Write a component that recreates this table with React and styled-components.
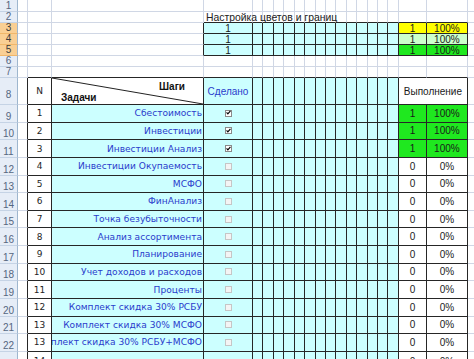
import React from 'react';
import styled, { createGlobalStyle } from 'styled-components';

const GRID = '#d0d7e5';
const DARK = '#262626';
const CYAN = '#ccffff';
const BLUE = '#2a3ccc';

const colWidths = [18, 10, 24, 152, 49, ...Array(14).fill(10.43), 28, 41, 20];
const rowHeights = [12, 11, 11, 11, 11, 11, 11, 27, ...Array(14).fill(17.64), 20];

const tasks = [
  [1, 'Сбестоимость'],
  [2, 'Инвестиции'],
  [3, 'Инвестиции Анализ'],
  [4, 'Инвестиции Окупаемость'],
  [5, 'МСФО'],
  [6, 'ФинАнализ'],
  [7, 'Точка безубыточности'],
  [8, 'Анализ ассортимента'],
  [9, 'Планирование'],
  [10, 'Учет доходов и расходов'],
  [11, 'Проценты'],
  [12, 'Комплект скидка 30% РСБУ'],
  [13, 'Комплект скидка 30% МСФО'],
  [13, 'Комплект скидка 30% РСБУ+МСФО'],
  [14, ''],
];

const setupColors = { 3: '#ffff00', 4: '#ccffcc', 5: '#1fe81f' };

const GlobalStyle = createGlobalStyle`
  html, body { margin: 0; padding: 0; background: #fff; overflow: hidden; }
  body { width: 474px; height: 359px; }
`;

const Sheet = styled.div`
  display: grid;
  grid-template-columns: ${p => p.$cols};
  grid-template-rows: ${p => p.$rows};
  width: 474px;
  height: 359px;
  overflow: hidden;
  font-family: "Liberation Sans", Arial, sans-serif;
`;

const RowHead = styled.div`
  box-sizing: border-box;
  display: flex;
  align-items: flex-end;
  justify-content: center;
  padding-bottom: ${p => (p.$tall ? 4 : 0)}px;
  background: ${p => (p.$active ? '#f9cf94' : '#e6edf7')};
  border-right: 1px solid #9eb6ce;
  border-bottom: 1px solid ${p => (p.$active ? '#f0b76a' : '#c5d3e5')};
  color: ${p => (p.$active ? '#3a3a3a' : '#55667f')};
  font-size: 10px;
  line-height: 10px;
  overflow: hidden;
`;

const Cell = styled.div`
  box-sizing: border-box;
  min-width: 0;
  display: flex;
  align-items: center;
  justify-content: ${p => p.$justify || 'center'};
  padding: 0 ${p => p.$pad || 0}px;
  background: ${p => p.$bg || '#fff'};
  border-right: 1px solid ${p => p.$br};
  border-bottom: 1px solid ${p => p.$bb};
  grid-column: span ${p => p.$span || 1};
  color: ${p => p.$color || '#1a1a1a'};
  font-size: 10px;
  white-space: nowrap;
  overflow: ${p => (p.$spill ? 'visible' : 'hidden')};
  position: relative;
`;

const Caption = styled.span`
  position: relative;
  z-index: 1;
  padding-left: 2px;
  color: #222;
  font-size: 10.4px;
`;

const TaskName = styled.span`
  flex-shrink: 0;
  font-family: "DejaVu Sans", Verdana, sans-serif;
  font-size: 9.1px;
  color: ${BLUE};
`;

const Num = styled.span`
  font-family: "DejaVu Sans", Verdana, sans-serif;
  font-size: 9px;
  color: #1e1e1e;
`;

const Done = styled.span`
  color: ${BLUE};
  font-size: 10px;
`;

const DiagLabels = styled.div`
  position: absolute;
  inset: 0;
  display: flex;
  flex-direction: column;
  justify-content: center;
  padding: 1px 0 0;
  font-weight: bold;
  font-size: 10px;
  line-height: 11px;
  color: #111;
`;

const Steps = styled.span`
  align-self: flex-end;
  padding-right: 18px;
`;

const Tasks = styled.span`
  align-self: flex-start;
  padding-left: 9px;
`;

const DiagLine = styled.svg`
  position: absolute;
  inset: 0;
  width: 100%;
  height: 100%;
`;

const Box = styled.span`
  box-sizing: border-box;
  width: 7px;
  height: 7px;
  display: flex;
  align-items: center;
  justify-content: center;
  background: ${p => (p.$checked ? '#fff' : '#f4f4f4')};
  border: 1px solid ${p => (p.$checked ? '#8a8a8a' : '#c6c6c6')};
`;

function CheckBox({ checked }) {
  return (
    <Box $checked={checked}>
      {checked && (
        <svg width="7" height="7" viewBox="0 0 7 7" style={{ marginTop: -1 }}>
          <polyline points="0.8,3.4 2.6,5.4 6.2,1.2" fill="none" stroke="#000" strokeWidth="1.6" />
        </svg>
      )}
    </Box>
  );
}

const isTable = (r, c) =>
  (r >= 3 && r <= 5 && c >= 4 && c <= 20) || (r >= 8 && c >= 2 && c <= 20);

const borders = (r, c, last = c) => ({
  $br: isTable(r, last) || isTable(r, last + 1) ? DARK : GRID,
  $bb: isTable(r, c) || isTable(r + 1, c) ? DARK : GRID,
});

function cellFor(r, c) {
  const b = borders(r, c);
  const key = `${r}-${c}`;

  if (r === 2 && c === 4) {
    return <Cell key={key} {...b} $justify="flex-start" $spill><Caption>Настройка цветов и границ</Caption></Cell>;
  }

  if (r >= 3 && r <= 5 && c >= 4) {
    if (c === 4) return <Cell key={key} {...b} $bg={CYAN}>1</Cell>;
    if (c === 19) return <Cell key={key} {...b} $bg={setupColors[r]}>1</Cell>;
    if (c === 20) return <Cell key={key} {...b} $bg={setupColors[r]}>100%</Cell>;
    if (c < 19) return <Cell key={key} {...b} $bg={CYAN} />;
  }

  if (r === 8) {
    if (c === 2) return <Cell key={key} {...b}><Num>N</Num></Cell>;
    if (c === 3) {
      return (
        <Cell key={key} {...b}>
          <DiagLine viewBox="0 0 100 100" preserveAspectRatio="none">
            <line x1="0" y1="0" x2="100" y2="100" stroke="#222" strokeWidth="1" vectorEffect="non-scaling-stroke" />
          </DiagLine>
          <DiagLabels>
            <Steps>Шаги</Steps>
            <Tasks>Задачи</Tasks>
          </DiagLabels>
        </Cell>
      );
    }
    if (c === 4) return <Cell key={key} {...b} $bg={CYAN}><Done>Сделано</Done></Cell>;
    if (c >= 5 && c <= 18) return <Cell key={key} {...b} $bg={CYAN} />;
    if (c === 19) return <Cell key={key} {...borders(r, c, 20)} $span={2}>Выполнение</Cell>;
    if (c === 20) return null;
  }

  if (r >= 9) {
    const [n, name] = tasks[r - 9];
    const done = r <= 11;
    if (c === 2) return <Cell key={key} {...b}><Num>{n}</Num></Cell>;
    if (c === 3) return <Cell key={key} {...b} $bg={CYAN} $justify="flex-end" $pad={1}><TaskName>{name}</TaskName></Cell>;
    if (c === 4) return <Cell key={key} {...b} $bg={CYAN}>{name && <CheckBox checked={done} />}</Cell>;
    if (c >= 5 && c <= 18) return <Cell key={key} {...b} $bg={CYAN} />;
    if (c === 19) return <Cell key={key} {...b} $bg={done ? '#1fe81f' : '#fff'}>{done ? 1 : 0}</Cell>;
    if (c === 20) return <Cell key={key} {...b} $bg={done ? '#1fe81f' : '#fff'}>{done ? '100%' : '0%'}</Cell>;
  }

  return <Cell key={key} {...b} />;
}

export default function App() {
  const rows = rowHeights.map((_, i) => i + 1);
  return (
    <>
      <GlobalStyle />
      <Sheet
        $cols={colWidths.map(w => `${w}px`).join(' ')}
        $rows={rowHeights.map(h => `${h}px`).join(' ')}
      >
        {rows.map(r => (
          <React.Fragment key={r}>
            <RowHead $active={r >= 3 && r <= 5} $tall={r === 8}>{r}</RowHead>
            {colWidths.slice(1).map((_, i) => cellFor(r, i + 1))}
          </React.Fragment>
        ))}
      </Sheet>
    </>
  );
}
